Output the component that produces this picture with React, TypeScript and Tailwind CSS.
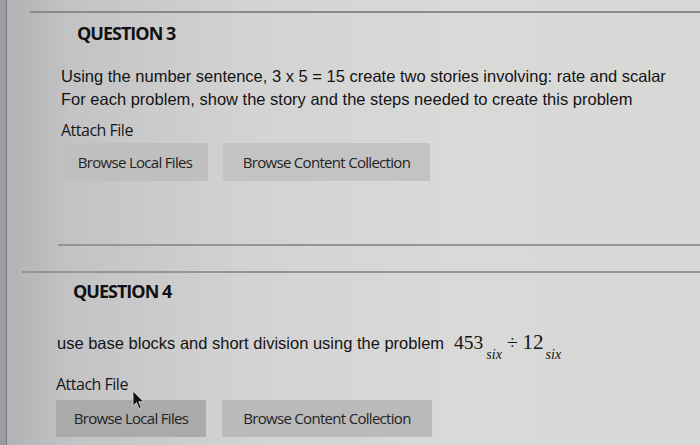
import React from "react";

function Btn({ label, w, h, bg }: { label: string; w: string; h: string; bg: string }) {
  return (
    <div
      className={`${w} ${h} ${bg} flex items-center justify-center font-['Open_Sans',sans-serif] text-[15px] tracking-[-0.7px] text-[#242424]`}
    >
      {label}
    </div>
  );
}

function Cursor() {
  return (
    <svg
      className="absolute left-[132px] top-[390px]"
      width="13"
      height="20"
      viewBox="0 0 13 20"
    >
      <path
        d="M1 1 L1 16 L4.5 12.5 L7 18.5 L9.2 17.6 L6.8 11.8 L11.5 11.8 Z"
        fill="#111"
        stroke="#e0e0e0"
        strokeWidth="0.8"
      />
    </svg>
  );
}

export default function App() {
  return (
    <div className="relative w-[700px] h-[445px] overflow-hidden bg-[linear-gradient(90deg,#9c9ca0_0px,#9c9ca0_6px,#7a7a7e_6px,#7a7a7e_7px,#b2b2b5_7px,#c3c3c5_70px,#d3d3d3_250px,#d9d9d8_450px,#d8d8d6_700px)] text-[#1a1a1a]">
      <div className="flex flex-col">
        {/* top rule */}
        <div className="ml-[30px] mt-[11px] h-[2px] bg-[#8a8a8c]" />

        {/* Question 3 */}
        <div className="flex flex-col pl-[61px]">
          <div className="ml-[16px] mt-[8px] h-[24px] leading-[24px] font-['Open_Sans',sans-serif] font-bold text-[18px] tracking-[-1px] text-[#111]">
            QUESTION 3
          </div>
          <div className="mt-[20px] font-['Liberation_Sans',Arial,sans-serif] text-[16.5px] leading-[23px] text-[#141414]">
            <div>Using the number sentence, 3 x 5 = 15 create two stories involving: rate and scalar</div>
            <div>For each problem, show the story and the steps needed to create this problem</div>
          </div>
          <div className="mt-[9px] h-[20px] leading-[20px] font-['Open_Sans',sans-serif] text-[16px] tracking-[-0.5px] text-[#181818]">
            Attach File
          </div>
          <div className="mt-[3px] flex gap-[15px] pl-[1px]">
            <Btn label="Browse Local Files" w="w-[146px]" h="h-[38px]" bg="bg-[#bfbfbf]" />
            <Btn label="Browse Content Collection" w="w-[207px]" h="h-[38px]" bg="bg-[#c3c3c3]" />
          </div>
        </div>

        {/* separators */}
        <div className="ml-[58px] mt-[63px] h-[2px] bg-[#959597]" />
        <div className="ml-[22px] mt-[25px] h-[2px] bg-[#959597]" />

        {/* Question 4 */}
        <div className="flex flex-col pl-[56px]">
          <div className="ml-[17px] mt-[6px] h-[24px] leading-[24px] font-['Open_Sans',sans-serif] font-bold text-[18px] tracking-[-1px] text-[#111]">
            QUESTION 4
          </div>
          <div className="ml-[1px] mt-[27px] h-[24px] leading-[24px] whitespace-nowrap font-['Liberation_Sans',Arial,sans-serif] text-[16.5px] text-[#141414]">
            use base blocks and short division using the problem
            <span className="ml-[10px] font-['Liberation_Serif','Times_New_Roman',serif] text-[19.5px]">453</span>
            <span className="ml-[3px] align-[-10px] font-['Liberation_Serif','Times_New_Roman',serif] italic text-[14px] leading-[12px]">six</span>
            <span className="ml-[5px] font-['Liberation_Serif','Times_New_Roman',serif] text-[19.5px]">÷</span>
            <span className="ml-[5px] font-['Liberation_Serif','Times_New_Roman',serif] text-[21px]">12</span>
            <span className="ml-[2px] align-[-10px] font-['Liberation_Serif','Times_New_Roman',serif] italic text-[14px] leading-[12px]">six</span>
          </div>
          <div className="mt-[20px] h-[20px] leading-[20px] font-['Open_Sans',sans-serif] text-[16px] tracking-[-0.5px] text-[#181818]">
            Attach File
          </div>
          <div className="mt-[6px] flex gap-[16px]">
            <Btn label="Browse Local Files" w="w-[150px]" h="h-[37px]" bg="bg-[#aaaaaa]" />
            <Btn label="Browse Content Collection" w="w-[210px]" h="h-[37px]" bg="bg-[#bababa]" />
          </div>
        </div>
      </div>
      <Cursor />
    </div>
  );
}
